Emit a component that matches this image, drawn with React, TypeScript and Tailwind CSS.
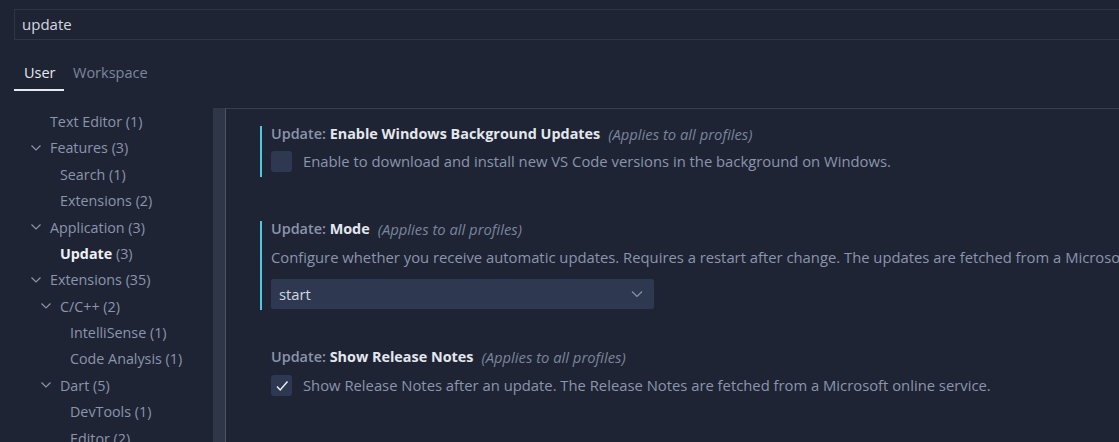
import React from "react";

const font = { fontFamily: '"Open Sans", "Noto Sans", sans-serif' };

function Chevron({ className = "" }: { className?: string }) {
  return (
    <svg width="12" height="8" viewBox="0 0 12 8" className={className}>
      <path d="M1.5 1.5 L6 6 L10.5 1.5" fill="none" stroke="#8b95ad" strokeWidth="1.2" />
    </svg>
  );
}

type Item = { label: string; count: string; level: number; chevron?: boolean; active?: boolean };

const items: Item[] = [
  { label: "Text Editor", count: "(1)", level: 1 },
  { label: "Features", count: "(3)", level: 1, chevron: true },
  { label: "Search", count: "(1)", level: 2 },
  { label: "Extensions", count: "(2)", level: 2 },
  { label: "Application", count: "(3)", level: 1, chevron: true },
  { label: "Update", count: "(3)", level: 2, active: true },
  { label: "Extensions", count: "(35)", level: 1, chevron: true },
  { label: "C/C++", count: "(2)", level: 2, chevron: true },
  { label: "IntelliSense", count: "(1)", level: 3 },
  { label: "Code Analysis", count: "(1)", level: 3 },
  { label: "Dart", count: "(5)", level: 2, chevron: true },
  { label: "DevTools", count: "(1)", level: 3 },
  { label: "Editor", count: "(2)", level: 3 },
];

const indent: Record<number, string> = { 1: "pl-[50px]", 2: "pl-[60px]", 3: "pl-[70px]" };

function TreeRow({ it }: { it: Item }) {
  return (
    <div className={`relative flex h-[26.4px] shrink-0 items-center whitespace-nowrap text-[14.3px] text-[#8b95ad] ${indent[it.level]}`}>
      {it.chevron && (
        <span className="absolute top-[9px]" style={{ left: it.level * 10 + 20 }}>
          <Chevron />
        </span>
      )}
      {it.active ? (
        <span>
          <span className="font-bold text-[#eef0f4]">{it.label}</span> {it.count}
        </span>
      ) : (
        <span>
          {it.label} {it.count}
        </span>
      )}
    </div>
  );
}

function Title({ name }: { name: string }) {
  return (
    <div className="flex h-[16px] items-center whitespace-nowrap text-[14.4px]">
      <span className="font-semibold text-[#8b95ad]">Update:&nbsp;</span>
      <span className="font-bold text-[#e4e7ee]">{name}</span>
      <span className="ml-[8px] text-[14.8px] italic text-[#7a849c]">(Applies to all profiles)</span>
    </div>
  );
}

export default function App() {
  return (
    <div className="relative h-[442px] w-[1119px] overflow-hidden bg-[#1e2433]" style={font}>
      <div className="pl-[14px] pt-[9px]">
        <div className="flex h-[31px] w-[1120px] items-center border border-[#2d3548] pl-[7px] text-[15px] text-[#d4d8e0]">
          update
        </div>
      </div>
      <div className="flex h-[51px] pl-[14px] pt-[20px]">
        <div className="flex h-[31px] flex-col">
          <div className="flex h-[29px] w-[50px] items-start pl-[10px] pt-[2px] text-[14.5px] text-[#e6e9ef]">User</div>
          <div className="h-[2px] w-[50px] bg-[#e6e9ef]" />
        </div>
        <div className="flex h-[29px] items-start pl-[9px] pt-[2px] text-[14.5px] text-[#7d879e]">Workspace</div>
      </div>
      <div className="mt-[17px] flex h-[334px]">
        <div className="flex w-[213px] shrink-0 flex-col overflow-hidden pt-[0.5px]">
          {items.map((it, i) => (
            <TreeRow key={i} it={it} />
          ))}
        </div>
        <div className="w-[12px] shrink-0 bg-[#2f3648]" />
        <div className="w-[1px] shrink-0 bg-[#4a5268]" />
        <div className="min-w-0 flex-1 overflow-hidden border-t border-[#363e52] pl-[34px] text-[14.8px]">
          {/* Setting 1 */}
          <div className="mt-[17px] flex">
            <div className="w-[2px] shrink-0 bg-[#4ec9e0]" />
            <div className="pb-[5px] pl-[9px]">
              <div className="h-[14px]">
                <Title name="Enable Windows Background Updates" />
              </div>
              <div className="mt-[11px] flex h-[21px] items-center">
                <div className="h-[21px] w-[21px] shrink-0 rounded-[3px] bg-[#2e3850]" />
                <span className="ml-[11px] whitespace-nowrap text-[#8b95ad]">
                  Enable to download and install new VS Code versions in the background on Windows.
                </span>
              </div>
            </div>
          </div>
          {/* Setting 2 */}
          <div className="mt-[44px] flex">
            <div className="w-[2px] shrink-0 bg-[#4ec9e0]" />
            <div className="pb-[1px] pl-[9px]">
              <Title name="Mode" />
              <div className="mt-[12px] flex h-[16px] items-center whitespace-nowrap text-[#8b95ad]">
                Configure whether you receive automatic updates. Requires a restart after change. The updates are fetched from a Microsoft online service.
              </div>
              <div className="mt-[14px] flex h-[30px] w-[383px] items-center justify-between rounded-[2px] bg-[#2e3850] pl-[8px] pr-[11px] text-[#d4d8e0]">
                <span>start</span>
                <svg width="12" height="8" viewBox="0 0 12 8">
                  <path d="M1 1.5 L6 6.5 L11 1.5" fill="none" stroke="#8b95ad" strokeWidth="1.1" />
                </svg>
              </div>
            </div>
          </div>
          {/* Setting 3 */}
          <div className="mt-[39px] flex">
            <div className="w-[2px] shrink-0" />
            <div className="pl-[9px]">
              <Title name="Show Release Notes" />
              <div className="mt-[10px] flex h-[21px] items-center">
                <div className="flex h-[21px] w-[21px] shrink-0 items-center justify-center rounded-[3px] bg-[#2e3850]">
                  <svg width="16" height="16" viewBox="0 0 16 16">
                    <path d="M3 8.5 L6.2 12 L13.5 3.5" fill="none" stroke="#eef0f4" strokeWidth="1.4" />
                  </svg>
                </div>
                <span className="ml-[11px] whitespace-nowrap text-[#8b95ad]">
                  Show Release Notes after an update. The Release Notes are fetched from a Microsoft online service.
                </span>
              </div>
            </div>
          </div>
        </div>
      </div>
    </div>
  );
}
